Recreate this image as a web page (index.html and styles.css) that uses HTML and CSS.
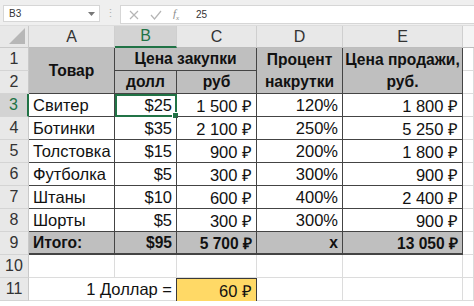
FILE: index.html
```html
<!DOCTYPE html>
<html>
<head>
    <meta charset="UTF-8">
    <title>Наценка</title>
    <link rel="stylesheet" href="styles.css">
</head>
<body>
<div class="formula-bar">
    <div class="name-box">
        <span>B3</span>
        <svg class="drop" width="7" height="4" viewBox="0 0 7 4"><path d="M0 0h7L3.5 4z" fill="#777"/></svg>
    </div>
    <div class="grip">⋮</div>
    <div class="formula">
        <svg class="ficon" width="10" height="10" viewBox="0 0 10 10"><path d="M1 1l8 8M9 1l-8 8" stroke="#b5b5b5" stroke-width="1.2" fill="none"/></svg>
        <svg class="ficon" width="12" height="10" viewBox="0 0 12 10"><path d="M1 5l3.5 4L11 1" stroke="#b5b5b5" stroke-width="1.2" fill="none"/></svg>
        <span class="fx">f<sub>x</sub></span>
        <span class="value">25</span>
    </div>
</div>

<div class="sheet">
    <!-- заголовки столбцов -->
    <div class="corner">
        <svg width="16" height="16" viewBox="0 0 16 16"><path d="M16 0V16H0z" fill="#b7b7b7"/></svg>
    </div>
    <div class="col-head">A</div>
    <div class="col-head active">B</div>
    <div class="col-head">C</div>
    <div class="col-head">D</div>
    <div class="col-head">E</div>
    <div class="col-head blank"></div>

    <!-- 1 -->
    <div class="row-head">1</div>
    <div class="cell t head span-r2 center">Товар</div>
    <div class="cell t head span-c2 center">Цена закупки</div>
    <div class="cell t head span-r2 center two-line">Процент<br>накрутки</div>
    <div class="cell t head span-r2 center two-line">Цена продажи,<br>руб.</div>
    <div class="cell"></div>

    <!-- 2 -->
    <div class="row-head">2</div>
    <div class="cell t head center">долл</div>
    <div class="cell t head center">руб</div>
    <div class="cell"></div>

    <!-- 3 -->
    <div class="row-head active">3</div>
    <div class="cell t">Свитер</div>
    <div class="cell t num selected">$25</div>
    <div class="cell t num">1 500 ₽</div>
    <div class="cell t num">120%</div>
    <div class="cell t num">1 800 ₽</div>
    <div class="cell"></div>

    <!-- 4 -->
    <div class="row-head">4</div>
    <div class="cell t">Ботинки</div>
    <div class="cell t num">$35</div>
    <div class="cell t num">2 100 ₽</div>
    <div class="cell t num">250%</div>
    <div class="cell t num">5 250 ₽</div>
    <div class="cell"></div>

    <!-- 5 -->
    <div class="row-head">5</div>
    <div class="cell t">Толстовка</div>
    <div class="cell t num">$15</div>
    <div class="cell t num">900 ₽</div>
    <div class="cell t num">200%</div>
    <div class="cell t num">1 800 ₽</div>
    <div class="cell"></div>

    <!-- 6 -->
    <div class="row-head">6</div>
    <div class="cell t">Футболка</div>
    <div class="cell t num">$5</div>
    <div class="cell t num">300 ₽</div>
    <div class="cell t num">300%</div>
    <div class="cell t num">900 ₽</div>
    <div class="cell"></div>

    <!-- 7 -->
    <div class="row-head">7</div>
    <div class="cell t">Штаны</div>
    <div class="cell t num">$10</div>
    <div class="cell t num">600 ₽</div>
    <div class="cell t num">400%</div>
    <div class="cell t num">2 400 ₽</div>
    <div class="cell"></div>

    <!-- 8 -->
    <div class="row-head">8</div>
    <div class="cell t">Шорты</div>
    <div class="cell t num">$5</div>
    <div class="cell t num">300 ₽</div>
    <div class="cell t num">300%</div>
    <div class="cell t num">900 ₽</div>
    <div class="cell"></div>

    <!-- 9 итог -->
    <div class="row-head">9</div>
    <div class="cell t head total">Итого:</div>
    <div class="cell t head total num">$95</div>
    <div class="cell t head total num">5 700 ₽</div>
    <div class="cell t head total num">x</div>
    <div class="cell t head total num">13 050 ₽</div>
    <div class="cell"></div>

    <!-- 10 -->
    <div class="row-head">10</div>
    <div class="cell"></div>
    <div class="cell"></div>
    <div class="cell"></div>
    <div class="cell"></div>
    <div class="cell"></div>
    <div class="cell"></div>

    <!-- 11 курс -->
    <div class="row-head">11</div>
    <div class="cell span-c2 num">1 Доллар =</div>
    <div class="cell num rate">60 ₽</div>
    <div class="cell"></div>
    <div class="cell"></div>
    <div class="cell"></div>
</div>
</body>
</html>
```

FILE: styles.css
```css
:root {
    --grid-line: #dcdcdc;
    --table-line: #444444;
    --head-fill: #bfbfbf;
    --excel-green: #217346;
    --header-bg: #e8e8e8;
}

body, html {
    margin: 0;
    padding: 0;
    background: #ffffff;
    font-family: 'Liberation Sans', Arial, sans-serif;
    color: #111;
    overflow: hidden;
}

.formula-bar {
    height: 26px;
    box-sizing: border-box;
    background: #efefef;
    display: flex;
    align-items: flex-start;
    padding: 5px 0 0 3px;
    border-bottom: 1px solid #dddddd;
}

.name-box {
    width: 97px;
    height: 17px;
    box-sizing: border-box;
    background: white;
    border: 1px solid #d6d6d6;
    display: flex;
    align-items: center;
    justify-content: space-between;
    padding: 0 4px 0 5px;
    font-size: 10px;
    color: #333;
}

.grip {
    width: 20px;
    text-align: center;
    font-size: 11px;
    line-height: 17px;
    color: #b0b0b0;
}

.formula {
    flex: 1;
    height: 17px;
    background: white;
    border: 1px solid #d6d6d6;
    border-right: none;
    display: flex;
    align-items: center;
    padding-left: 8px;
    gap: 11px;
}

.fx {
    font-family: 'Liberation Serif', serif;
    font-style: italic;
    font-size: 11px;
    color: #8a8a8a;
    width: 12px;
}

.fx sub {
    font-size: 7px;
}

.value {
    font-size: 10px;
    color: #333;
}

.sheet {
    display: grid;
    grid-template-columns: 29px 86px 62px 80px 86px 120px 1fr;
    grid-template-rows: 22px repeat(11, 23px);
}

.corner {
    background: var(--header-bg);
    border-right: 1px solid #c9c9c9;
    border-bottom: 1px solid #c9c9c9;
    display: flex;
    align-items: flex-end;
    justify-content: flex-end;
    padding: 0 3px 3px 0;
}

.col-head {
    background: var(--header-bg);
    border-right: 1px solid #cfcfcf;
    border-bottom: 1px solid #bdbdbd;
    display: flex;
    align-items: center;
    justify-content: center;
    font-size: 16px;
    color: #333;
}

.col-head.active {
    background: #d3d3d3;
    color: var(--excel-green);
    border-bottom: 2px solid var(--excel-green);
}

.col-head.blank {
    background: #f4f4f4;
    border-right: none;
}

.row-head {
    background: var(--header-bg);
    border-right: 1px solid #c9c9c9;
    border-bottom: 1px solid #d4d4d4;
    display: flex;
    align-items: center;
    justify-content: center;
    font-size: 16px;
    color: #333;
}

.row-head.active {
    background: #d3d3d3;
    color: var(--excel-green);
    border-right: 2px solid var(--excel-green);
}

.cell {
    border-right: 1px solid var(--grid-line);
    border-bottom: 1px solid var(--grid-line);
    display: flex;
    align-items: center;
    padding: 0 4px;
    font-size: 16.5px;
    white-space: nowrap;
    min-width: 0;
    position: relative;
}

.cell.t {
    border-right-color: var(--table-line);
    border-bottom-color: var(--table-line);
}

.head {
    background: var(--head-fill);
    font-weight: bold;
    font-size: 15.6px;
}

.center {
    justify-content: center;
    text-align: center;
}

.num {
    justify-content: flex-end;
}

.two-line {
    line-height: 22px;
}

.span-r2 {
    grid-row: span 2;
}

.span-c2 {
    grid-column: span 2;
}

.total {
    border-bottom-width: 2px;
}

.selected {
    outline: 2px solid var(--excel-green);
    outline-offset: -2px;
}

.selected::after {
    content: "";
    position: absolute;
    right: -3px;
    bottom: -3px;
    width: 5px;
    height: 5px;
    background: var(--excel-green);
    border: 1px solid white;
}

.rate {
    background: #ffd966;
    border: 1px solid #3a3a3a;
    margin: 0 0 -1px -1px;
}
```
